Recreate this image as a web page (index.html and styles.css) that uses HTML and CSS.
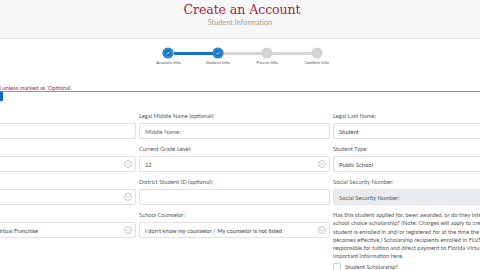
FILE: index.html
```html
<!DOCTYPE html>
<html>
<head>
<meta charset="utf-8">
<link rel="stylesheet" href="styles.css">
</head>
<body>
<header class="hdr">
  <h1 class="title">Create an Account</h1>
  <p class="subtitle">Student Information</p>
</header>

<nav class="steps">
  <div class="track">
    <span class="seg seg-done"></span>
    <span class="seg"></span>
    <span class="seg"></span>
  </div>
  <div class="step">
    <svg class="dot" viewBox="0 0 12 12"><circle cx="6" cy="6" r="5.6" fill="#1b77c5"/><circle cx="6" cy="6" r="4.2" fill="none" stroke="#cfe3f5" stroke-width="0.5" stroke-dasharray="0.8 0.6"/><path d="M4.4 6.4 L5.5 7.3 L7.6 4.8" fill="none" stroke="#fff" stroke-width="0.7"/></svg>
    <span class="step-label">Account Info</span>
  </div>
  <div class="step">
    <svg class="dot" viewBox="0 0 12 12"><circle cx="6" cy="6" r="5.6" fill="#1b77c5"/><circle cx="6" cy="6" r="4.2" fill="none" stroke="#cfe3f5" stroke-width="0.5" stroke-dasharray="0.8 0.6"/><path d="M4.4 6.4 L5.5 7.3 L7.6 4.8" fill="none" stroke="#fff" stroke-width="0.7"/></svg>
    <span class="step-label">Student Info</span>
  </div>
  <div class="step">
    <svg class="dot" viewBox="0 0 12 12"><circle cx="6" cy="6" r="5.6" fill="#d3d3d3"/></svg>
    <span class="step-label">Parent Info</span>
  </div>
  <div class="step">
    <svg class="dot" viewBox="0 0 12 12"><circle cx="6" cy="6" r="5.6" fill="#d3d3d3"/></svg>
    <span class="step-label">Confirm Info</span>
  </div>
</nav>

<main class="form">
  <p class="req">All fields are required unless marked as 'Optional'.</p>
  <div class="section-bar"><span class="tab"></span></div>

  <div class="grid">
    <div class="field">
      <label class="lbl">Legal First Name:</label>
      <div class="input"><span class="val">Test</span></div>
    </div>
    <div class="field">
      <label class="lbl">Legal Middle Name (optional):</label>
      <div class="input"><span class="ph">Middle Name:</span></div>
    </div>
    <div class="field">
      <label class="lbl">Legal Last Name:</label>
      <div class="input"><span class="val">Student</span></div>
    </div>

    <div class="field">
      <label class="lbl">Gender:</label>
      <div class="input select"><span class="val"></span>
        <svg class="chev" viewBox="0 0 10 10"><circle cx="5" cy="5" r="4.3" fill="none" stroke="#8a8a8a" stroke-width="0.6"/><path d="M3.1 4.2 L5 6.1 L6.9 4.2" fill="none" stroke="#8a8a8a" stroke-width="0.6"/></svg>
      </div>
    </div>
    <div class="field">
      <label class="lbl">Current Grade Level:</label>
      <div class="input select"><span class="val">12</span>
        <svg class="chev" viewBox="0 0 10 10"><circle cx="5" cy="5" r="4.3" fill="none" stroke="#8a8a8a" stroke-width="0.6"/><path d="M3.1 4.2 L5 6.1 L6.9 4.2" fill="none" stroke="#8a8a8a" stroke-width="0.6"/></svg>
      </div>
    </div>
    <div class="field">
      <label class="lbl">Student Type:</label>
      <div class="input"><span class="val">Public School</span></div>
    </div>

    <div class="field">
      <label class="lbl">School District:</label>
      <div class="input select"><span class="val"></span>
        <svg class="chev" viewBox="0 0 10 10"><circle cx="5" cy="5" r="4.3" fill="none" stroke="#8a8a8a" stroke-width="0.6"/><path d="M3.1 4.2 L5 6.1 L6.9 4.2" fill="none" stroke="#8a8a8a" stroke-width="0.6"/></svg>
      </div>
    </div>
    <div class="field">
      <label class="lbl">District Student ID (optional):</label>
      <div class="input"></div>
    </div>
    <div class="field">
      <label class="lbl">Social Security Number:</label>
      <div class="input readonly"><span class="val">Social Security Number:</span></div>
    </div>

    <div class="field">
      <label class="lbl">School:</label>
      <div class="input select"><span class="val">Seminole County Virtual Franchise</span>
        <svg class="chev" viewBox="0 0 10 10"><circle cx="5" cy="5" r="4.3" fill="none" stroke="#8a8a8a" stroke-width="0.6"/><path d="M3.1 4.2 L5 6.1 L6.9 4.2" fill="none" stroke="#8a8a8a" stroke-width="0.6"/></svg>
      </div>
    </div>
    <div class="field">
      <label class="lbl">School Counselor:</label>
      <div class="input select"><span class="val">I don't know my counselor / My counselor is not listed</span>
        <svg class="chev" viewBox="0 0 10 10"><circle cx="5" cy="5" r="4.3" fill="none" stroke="#8a8a8a" stroke-width="0.6"/><path d="M3.1 4.2 L5 6.1 L6.9 4.2" fill="none" stroke="#8a8a8a" stroke-width="0.6"/></svg>
      </div>
    </div>
    <div class="field">
      <p class="note">Has this student applied for, been awarded, or do they intend to apply for a<br>school choice scholarship? (Note: Charges will apply to credit hours the<br>student is enrolled in and/or registered for at the time the scholarship<br>becomes effective.) Scholarship recipients enrolled in FLVS Flex are<br>responsible for tuition and direct payment to Florida Virtual School. See<br>important information <a class="link" href="#">here</a>.</p>
      <div class="check"><span class="box"></span><span class="check-label">Student Scholarship?</span></div>
    </div>
  </div>
</main>
</body>
</html>
```

FILE: styles.css
```css
* { box-sizing: border-box; }
html, body { margin: 0; padding: 0; }
body {
  width: 480px;
  height: 270px;
  overflow: hidden;
  background: #fff;
  font-family: Lato, "Open Sans", sans-serif;
  color: #555;
}

.hdr {
  height: 39px;
  background: #f7f7f7;
  border-bottom: 1px solid #e4e4e4;
  text-align: center;
  padding-top: 2px;
}
.title {
  margin: 0;
  font-family: "DejaVu Serif", serif;
  font-weight: normal;
  font-size: 12.6px;
  line-height: 15px;
  color: #a3263f;
  letter-spacing: -0.1px;
  padding-left: 4px;
}
.subtitle {
  margin: 1px 0 0;
  font-size: 7px;
  line-height: 8px;
  color: #9a9a9a;
  font-weight: normal;
  letter-spacing: 0.15px;
}

.steps {
  position: relative;
  display: flex;
  justify-content: center;
  margin: 8px 0 0;
  padding-left: 5px;
}
.step {
  width: 49.4px;
  display: flex;
  flex-direction: column;
  align-items: center;
  position: relative;
  z-index: 1;
}
.dot { width: 12px; height: 12px; display: block; }
.step-label {
  margin-top: 1px;
  font-size: 4.4px;
  line-height: 6px;
  color: #555;
  white-space: nowrap;
}
.track {
  position: absolute;
  left: 174px;
  top: 4.5px;
  width: 148px;
  height: 3px;
  display: flex;
}
.seg { flex: 1; background: #d6d6d6; }
.seg-done { background: #1472c2; }

.form {
  margin-left: -55px;
  width: 600px;
}
.req {
  margin: 18px 0 0;
  padding-left: 2px;
  font-size: 5.8px;
  line-height: 7px;
  color: #a3263f;
}
.section-bar {
  margin-top: 0;
  border-top: 1px solid #5a9fd8;
  height: 9px;
}
.tab {
  display: block;
  width: 58px;
  height: 9px;
  background: #0b6ec4;
}

.grid {
  margin-top: 12px;
  display: grid;
  grid-template-columns: 191px 191px 191px;
  column-gap: 3px;
  row-gap: 6px;
  align-items: start;
}
.field { display: flex; flex-direction: column; }
.lbl {
  font-size: 5.8px;
  line-height: 7px;
  color: #5a5a5a;
  margin-bottom: 4px;
  white-space: nowrap;
}
.input {
  height: 16px;
  border: 1px solid #e0e0e0;
  border-radius: 2px;
  background: #fff;
  display: flex;
  align-items: center;
  padding: 0 3px 0 5px;
  font-size: 5.8px;
  color: #444;
  white-space: nowrap;
  overflow: hidden;
}
.select { justify-content: space-between; }
.readonly { background: #e9ecef; border-color: #e3e6e9; color: #555; }
.ph { color: #666; }
.val { overflow: hidden; }
.chev { width: 8px; height: 8px; flex: none; }

.note {
  margin: 0;
  font-size: 5.8px;
  line-height: 8.3px;
  color: #555;
  white-space: nowrap;
}
.link { color: #1c5fb5; text-decoration: none; }
.check {
  display: flex;
  align-items: center;
  gap: 4px;
  margin-top: 2px;
}
.box {
  width: 8px;
  height: 8px;
  border: 1px solid #cfcfcf;
  border-radius: 1px;
  background: #fff;
  flex: none;
}
.check-label { font-size: 5.8px; color: #555; }
```
